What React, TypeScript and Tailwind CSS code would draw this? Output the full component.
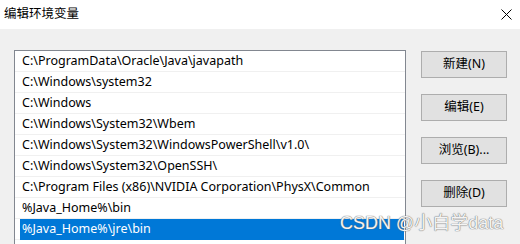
const paths = [
  "C:\\ProgramData\\Oracle\\Java\\javapath",
  "C:\\Windows\\system32",
  "C:\\Windows",
  "C:\\Windows\\System32\\Wbem",
  "C:\\Windows\\System32\\WindowsPowerShell\\v1.0\\",
  "C:\\Windows\\System32\\OpenSSH\\",
  "C:\\Program Files (x86)\\NVIDIA Corporation\\PhysX\\Common",
  "%Java_Home%\\bin",
  "%Java_Home%\\jre\\bin",
  "",
];

// last one is cut off by the window edge, so no label shows
const buttons = ["新建(N)", "编辑(E)", "浏览(B)...", "删除(D)", ""];

const App = () => {
  return (
    <div className="relative w-[520px] h-[244px] overflow-hidden bg-[#f0f0f0] font-['Noto_Sans','Noto_Sans_CJK_SC',sans-serif] text-[12.5px] text-black">
      <div className="h-[29px] bg-white flex items-center justify-between pl-[4px] pr-[8px]">
        <span className="text-[12.5px] leading-none">编辑环境变量</span>
        <svg width="11" height="11" viewBox="0 0 11 11">
          <path d="M0.5 0.5 L10.5 10.5 M10.5 0.5 L0.5 10.5" stroke="#000" strokeWidth="1" />
        </svg>
      </div>

      <div className="flex pl-[14px] pt-[21px]">
        <div className="w-[392px] h-[220px] shrink-0 border border-[#828790] bg-white">
          {paths.map((p, i) => {
            const selected = i === 8;
            return (
              <div key={i} className="h-[21px] border-b border-[#f0f0f0]">
                <div
                  className={
                    "ml-[5px] mr-[1px] h-[21px] pl-[2px] flex items-center whitespace-nowrap " +
                    (selected ? "bg-[#0078d7] text-white" : "")
                  }
                >
                  {p}
                </div>
              </div>
            );
          })}
        </div>

        <div className="ml-[15px] pt-[1px] flex flex-col">
          {buttons.map((b, i) => (
            <div
              key={i}
              className={
                "w-[86px] h-[27px] border border-[#adadad] bg-[#e1e1e1] flex items-center justify-center " +
                (i === 4 ? "mt-[37px]" : i > 0 ? "mt-[16px]" : "")
              }
            >
              {b}
            </div>
          ))}
        </div>
      </div>

      <div className="absolute left-[340px] top-[214px] text-[18px] leading-none text-[#f4f4f4] [text-shadow:0_0_1px_#6e6e6e,0_0_1px_#6e6e6e] font-['Liberation_Sans','Noto_Sans_CJK_SC',sans-serif]">
        CSDN @小白学data
      </div>
    </div>
  );
};

export default App;
